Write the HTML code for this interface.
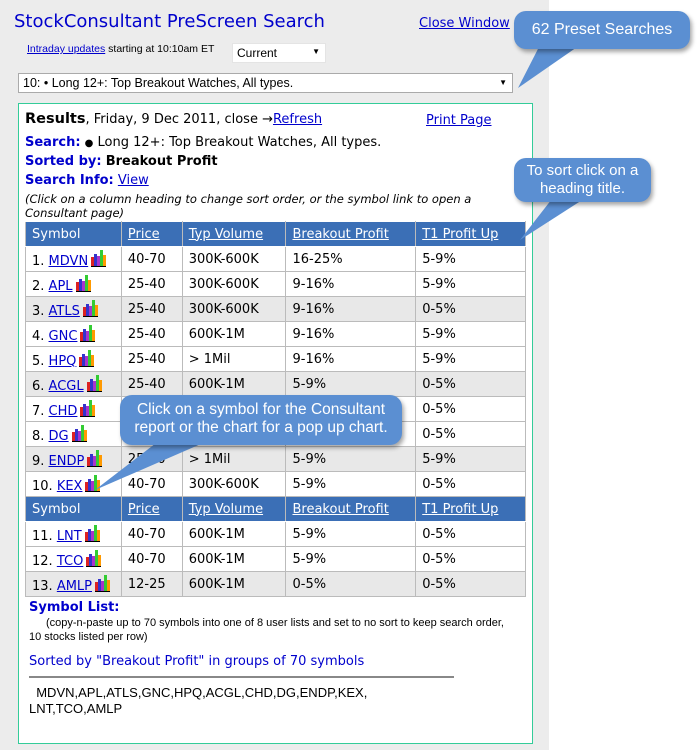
<!DOCTYPE html>
<html><head><meta charset="utf-8"><style>
*{margin:0;padding:0;box-sizing:border-box}
body{width:700px;height:750px;background:#fff;position:relative;font-family:"DejaVu Sans",Verdana,sans-serif;font-size:13px;color:#000;overflow:hidden}
#bg{position:absolute;left:0;top:0;width:549px;height:750px;background:#ececec}
.a{position:absolute;white-space:nowrap}
a,.u{color:#00c;text-decoration:underline}
.b{color:#00c;font-weight:bold}
#panel{position:absolute;left:18px;top:103px;width:515px;height:641px;background:#fff;border:1px solid #3c9}
table{position:absolute;left:25px;border-collapse:collapse;font-size:13px}
td{border:1px solid #bbb;height:25px;padding:0 0 0 6px;white-space:nowrap}
tr.h td{background:#3b6fb6;color:#fff;border-color:#fff #bbb}
tr.h td span{color:#fff;text-decoration:underline}
tr.g td{background:#e8e8e8}
.ic{display:inline-block;vertical-align:-2px;margin-left:3px}
.call{position:absolute;background:#5b8fd2;border-radius:12px;color:#fff;font-family:"Liberation Sans",Arial,sans-serif;text-align:center;box-shadow:2px 3px 4px rgba(0,0,0,.35)}
</style></head><body>
<div id="bg"></div>
<div class="a" style="left:14px;top:11px;font-size:18px;color:#00c">StockConsultant PreScreen Search</div>
<a class="a" style="left:419px;top:16px;font-size:13px">Close Window</a>
<div class="a" style="left:27px;top:43px;font-family:'Liberation Sans',Arial,sans-serif;font-size:10.5px"><a>Intraday updates</a> starting at 10:10am ET</div>
<div class="a" style="left:232px;top:43px;width:94px;height:20px;background:#fff;border:1px solid #e4e4e4;font-family:'Liberation Sans',Arial,sans-serif;font-size:12px;padding:2px 0 0 4px">Current<span style="position:absolute;right:5px;top:3px;font-size:8px">▼</span></div>
<div class="a" style="left:18px;top:73px;width:495px;height:20px;background:#fff;border:1px solid #aaa;font-family:'Liberation Sans',Arial,sans-serif;font-size:12.5px;padding:2px 0 0 4px">10: • Long 12+: Top Breakout Watches, All types.<span style="position:absolute;right:5px;top:4px;font-size:8px">▼</span></div>
<div id="panel"></div>
<div class="a" style="left:25px;top:111px"><b style="font-size:14.5px">Results</b>, Friday, 9 Dec 2011, close →<a>Refresh</a></div>
<a class="a" style="left:426px;top:113px">Print Page</a>
<div class="a" style="left:25px;top:135px"><span class="b">Search:</span> <span style="font-size:10px">●</span> Long 12+: Top Breakout Watches, All types.</div>
<div class="a" style="left:25px;top:154px"><span class="b">Sorted by:</span> <b>Breakout Profit</b></div>
<div class="a" style="left:25px;top:173px"><span class="b">Search Info:</span> <a>View</a></div>
<div class="a" style="left:25px;top:192px;font-size:11.5px;font-style:italic;line-height:14px;white-space:normal;width:500px">(Click on a column heading to change sort order, or the symbol link to open a Consultant page)</div>
<svg width="0" height="0" style="position:absolute"><defs><g id="ch"><rect x="0" y="7" width="3" height="9" fill="#d22"/><rect x="3" y="4" width="3" height="12" fill="#33c"/><rect x="6" y="6" width="3" height="10" fill="#a3c"/><rect x="9" y="0" width="3" height="16" fill="#3c3"/><rect x="12" y="5" width="3" height="11" fill="#f90"/><rect x="0" y="16" width="15" height="1" fill="#000"/></g></defs></svg>
<table style="top:221px;width:501px">
<colgroup><col style="width:96px"><col style="width:61px"><col style="width:104px"><col style="width:130px"><col style="width:110px"></colgroup>
<tr class="h"><td>Symbol</td><td><span>Price</span></td><td><span>Typ Volume</span></td><td><span>Breakout Profit</span></td><td><span>T1 Profit Up</span></td></tr>
<tr><td>1. <a>MDVN</a><svg class="ic" width="15" height="17"><use href="#ch"/></svg></td><td>40-70</td><td>300K-600K</td><td>16-25%</td><td>5-9%</td></tr>
<tr><td>2. <a>APL</a><svg class="ic" width="15" height="17"><use href="#ch"/></svg></td><td>25-40</td><td>300K-600K</td><td>9-16%</td><td>5-9%</td></tr>
<tr class="g"><td>3. <a>ATLS</a><svg class="ic" width="15" height="17"><use href="#ch"/></svg></td><td>25-40</td><td>300K-600K</td><td>9-16%</td><td>0-5%</td></tr>
<tr><td>4. <a>GNC</a><svg class="ic" width="15" height="17"><use href="#ch"/></svg></td><td>25-40</td><td>600K-1M</td><td>9-16%</td><td>5-9%</td></tr>
<tr><td>5. <a>HPQ</a><svg class="ic" width="15" height="17"><use href="#ch"/></svg></td><td>25-40</td><td>&gt; 1Mil</td><td>9-16%</td><td>5-9%</td></tr>
<tr class="g"><td>6. <a>ACGL</a><svg class="ic" width="15" height="17"><use href="#ch"/></svg></td><td>25-40</td><td>600K-1M</td><td>5-9%</td><td>0-5%</td></tr>
<tr><td>7. <a>CHD</a><svg class="ic" width="15" height="17"><use href="#ch"/></svg></td><td>25-40</td><td>600K-1M</td><td>5-9%</td><td>0-5%</td></tr>
<tr><td>8. <a>DG</a><svg class="ic" width="15" height="17"><use href="#ch"/></svg></td><td>25-40</td><td>600K-1M</td><td>5-9%</td><td>0-5%</td></tr>
<tr class="g"><td>9. <a>ENDP</a><svg class="ic" width="15" height="17"><use href="#ch"/></svg></td><td>25-40</td><td>&gt; 1Mil</td><td>5-9%</td><td>5-9%</td></tr>
<tr><td>10. <a>KEX</a><svg class="ic" width="15" height="17"><use href="#ch"/></svg></td><td>40-70</td><td>300K-600K</td><td>5-9%</td><td>0-5%</td></tr>
<tr class="h"><td>Symbol</td><td><span>Price</span></td><td><span>Typ Volume</span></td><td><span>Breakout Profit</span></td><td><span>T1 Profit Up</span></td></tr>
<tr><td>11. <a>LNT</a><svg class="ic" width="15" height="17"><use href="#ch"/></svg></td><td>40-70</td><td>600K-1M</td><td>5-9%</td><td>0-5%</td></tr>
<tr><td>12. <a>TCO</a><svg class="ic" width="15" height="17"><use href="#ch"/></svg></td><td>40-70</td><td>600K-1M</td><td>5-9%</td><td>0-5%</td></tr>
<tr class="g"><td>13. <a>AMLP</a><svg class="ic" width="15" height="17"><use href="#ch"/></svg></td><td>12-25</td><td>600K-1M</td><td>0-5%</td><td>0-5%</td></tr>
</table>
<div class="a b" style="left:29px;top:600px">Symbol List:</div>
<div class="a" style="left:29px;top:616px;font-family:'Liberation Sans',Arial,sans-serif;font-size:11px;line-height:14px;white-space:normal;width:490px;text-indent:17px">(copy-n-paste up to 70 symbols into one of 8 user lists and set to no sort to keep search order, 10 stocks listed per row)</div>
<div class="a" style="left:29px;top:654px;color:#00c">Sorted by "Breakout Profit" in groups of 70 symbols</div>
<div class="a" style="left:29px;top:676px;width:425px;height:2px;background:#888"></div>
<div class="a" style="left:29px;top:685px;font-family:'Liberation Sans',Arial,sans-serif;font-size:13px;line-height:16px">&nbsp;&nbsp;MDVN,APL,ATLS,GNC,HPQ,ACGL,CHD,DG,ENDP,KEX,<br>LNT,TCO,AMLP</div>
<svg class="a" style="left:0;top:0" width="700" height="750">
<polygon points="540,45 580,45 518,88" fill="#5b8fd2"/>
<polygon points="555,195 590,195 520,240" fill="#5b8fd2"/>
<polygon points="160,440 210,440 95,490" fill="#5b8fd2"/>
</svg>
<div class="call" style="left:514px;top:11px;width:176px;height:38px;font-size:16px;line-height:38px">62 Preset Searches</div>
<div class="call" style="left:514px;top:158px;width:137px;height:44px;font-size:15px;line-height:18px;padding-top:4px">To sort click on a heading title.</div>
<div class="call" style="left:120px;top:395px;width:282px;height:50px;font-size:15.5px;line-height:18px;padding-top:6px">Click on a symbol for the Consultant report or the chart for a pop up chart.</div>
</body></html>
